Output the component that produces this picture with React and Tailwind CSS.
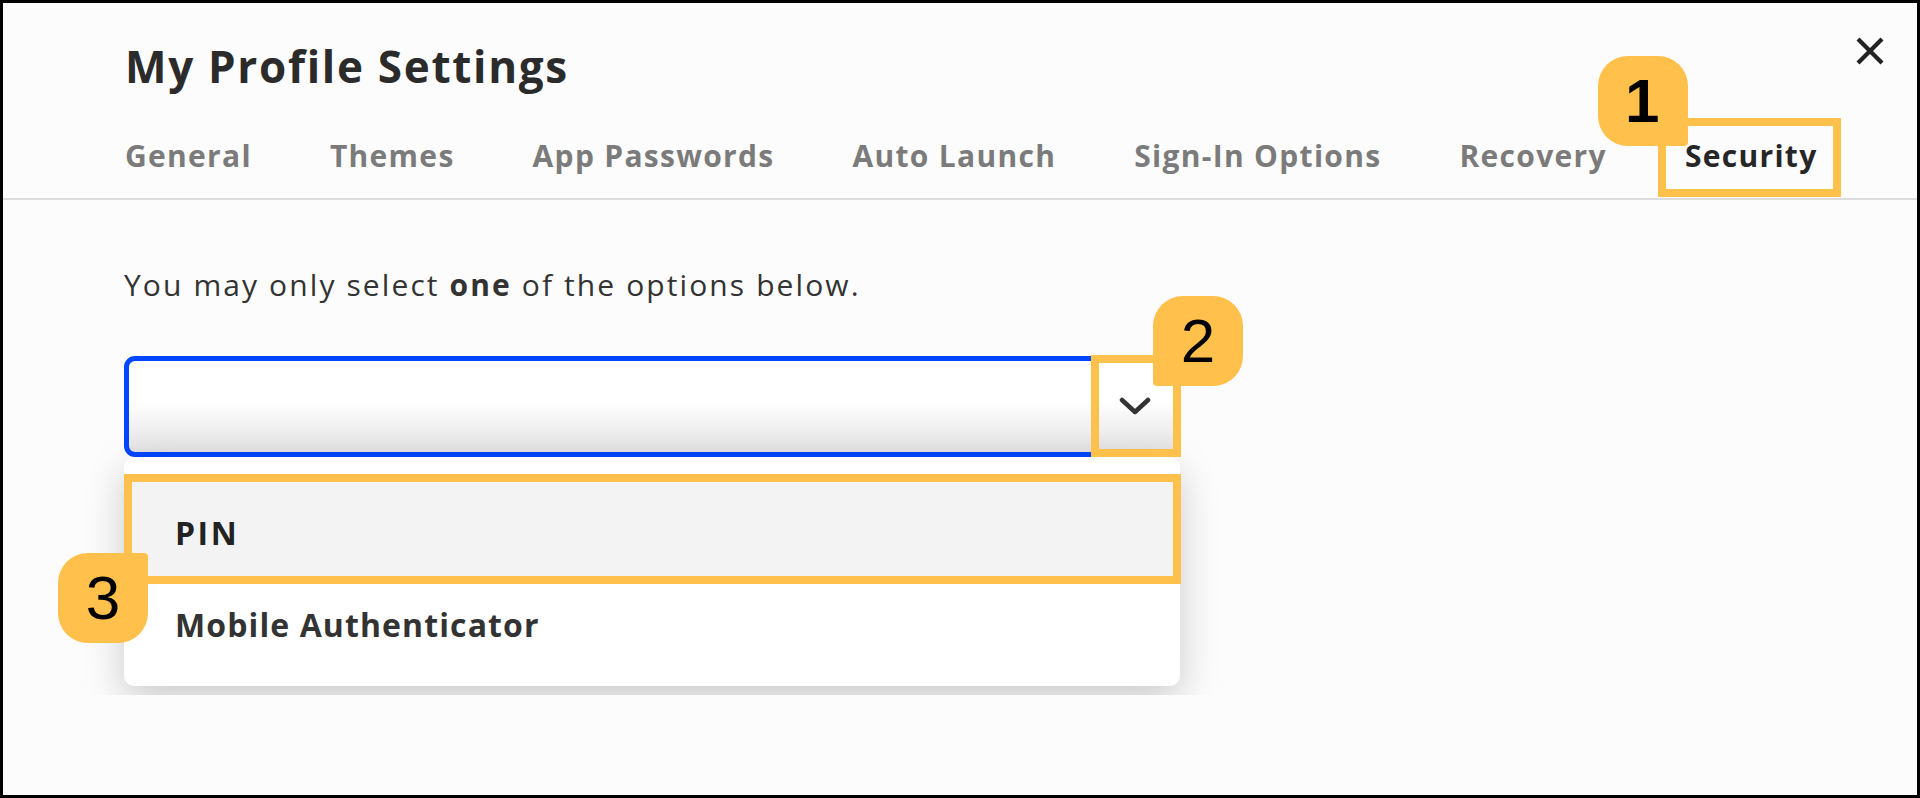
import React from 'react';

const tabs = ['General', 'Themes', 'App Passwords', 'Auto Launch', 'Sign-In Options', 'Recovery', 'Security'];

const Badge = ({ n, className }) => (
    <div
        className={`absolute z-20 w-[90px] h-[90px] bg-[#ffc04c] flex items-center justify-center text-black text-[62px] leading-none ${className}`}
        style={{ fontFamily: '"Liberation Sans", Arial, sans-serif' }}
    >
        {n}
    </div>
);

const App = () => {
    return (
        <div
            className="w-[1920px] h-[798px] border-[3px] border-black bg-[#fcfcfc] flex flex-col overflow-hidden"
            style={{ fontFamily: '"Open Sans", sans-serif' }}
        >
            {/* Header */}
            <div className="flex justify-between items-start pl-[122px] pr-[33px] pt-[41px]">
                <h1 className="text-[44px] font-bold leading-none tracking-[1.7px] text-[#2b2b2b]">My Profile Settings</h1>
                <button className="-mt-[7px] text-[#222]" aria-label="Close">
                    <svg width="28" height="28" viewBox="0 0 28 28" fill="none" stroke="currentColor" strokeWidth="4.2">
                        <line x1="2" y1="2" x2="26" y2="26" />
                        <line x1="26" y1="2" x2="2" y2="26" />
                    </svg>
                </button>
            </div>

            {/* Tabs */}
            <nav className="flex gap-[78px] pl-[122px] mt-[53px] pb-[27px] border-b-2 border-[#dcdcdc]">
                {tabs.map((tab) =>
                    tab === 'Security' ? (
                        <span key={tab} className="relative text-[30px] font-bold leading-none tracking-[1.3px] text-[#262626]">
                            {tab}
                            <span className="absolute -left-[27px] -top-[23px] w-[183px] h-[79px] border-[8px] border-[#ffc04c]" />
                            <Badge n="1" className="-left-[87px] -top-[85px] rounded-[30px] rounded-br-[4px]" />
                        </span>
                    ) : (
                        <span key={tab} className="text-[30px] font-bold leading-none tracking-[1.3px] text-[#7b7b7b]">
                            {tab}
                        </span>
                    )
                )}
            </nav>

            {/* Content */}
            <div className="h-[495px] overflow-hidden pl-[121px] pt-[70px]">
                <p className="text-[30px] leading-none tracking-[2.1px] text-[#333]">
                    You may only select <span className="font-bold">one</span> of the options below.
                </p>

                <div className="relative w-[1057px] mt-[56px]">
                    {/* Select */}
                    <div className="h-[101px] w-[1056px] border-[5px] border-[#0046ff] rounded-[11px] bg-linear-to-b from-white from-45% to-[#e2e2e2] flex items-center justify-end pr-[24px]">
                        <svg width="32" height="19" viewBox="0 0 32 19" fill="none" stroke="#333" strokeWidth="4.5" strokeLinecap="round" strokeLinejoin="round">
                            <polyline points="3 3 16 15 29 3" />
                        </svg>
                    </div>
                    <span className="absolute left-[967px] -top-[1px] w-[90px] h-[102px] border-[8px] border-[#ffc04c] z-10" />
                    <Badge n="2" className="left-[1029px] -top-[60px] rounded-[30px] rounded-bl-[4px]" />

                    {/* Dropdown */}
                    <div className="relative w-[1056px] bg-white rounded-[10px] pt-[17px] shadow-[0_14px_40px_rgba(0,0,0,0.2)]">
                        <div className="relative h-[110px] bg-[#f3f3f3] pl-[51px] pt-[43px]">
                            <span className="text-[32px] font-bold leading-none tracking-[2.5px] text-[#222]">PIN</span>
                            <span className="absolute left-0 top-0 -right-[1px] bottom-0 border-[8px] border-[#ffc04c]" />
                            <Badge n="3" className="-left-[66px] top-[79px] rounded-[30px] rounded-tr-[4px]" />
                        </div>
                        <div className="h-[102px] pl-[51px] pt-[25px]">
                            <span className="text-[32px] font-bold leading-none tracking-[1.1px] text-[#333]">Mobile Authenticator</span>
                        </div>
                    </div>
                </div>
            </div>
        </div>
    );
};

export default App;
